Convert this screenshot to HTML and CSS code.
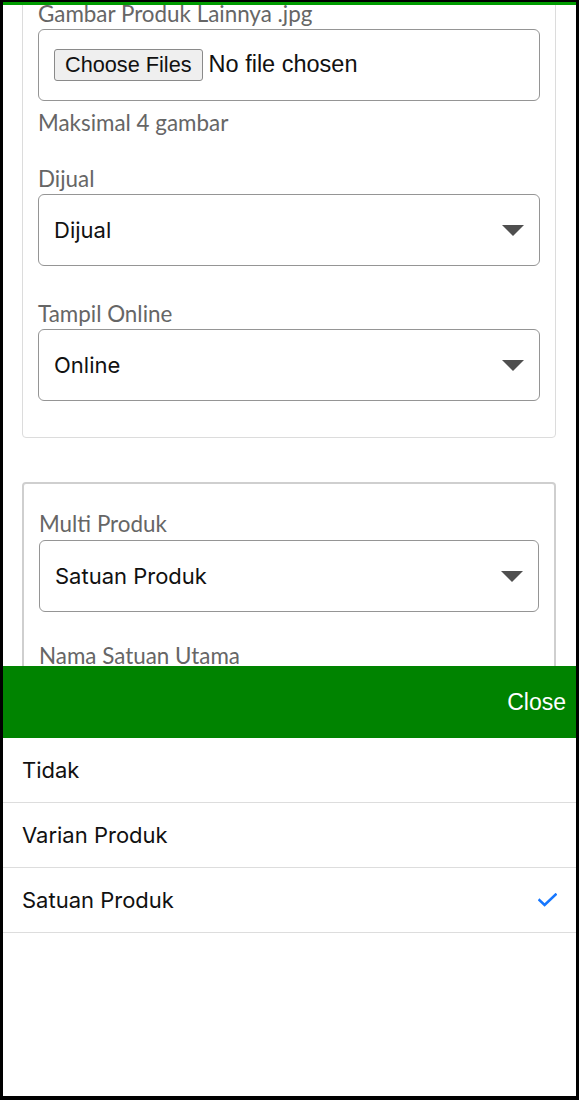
FILE: index.html
```html
<!DOCTYPE html>
<html lang="id">
<head>
<meta charset="utf-8">
<title>Produk</title>
<link rel="stylesheet" href="styles.css">
</head>
<body>
<div class="frame">
  <div class="topline"></div>
  <div class="viewport">
    <div class="page">
      <div class="card card-first">
        <div class="label">Gambar Produk Lainnya .jpg</div>
        <div class="filebox"><input class="file" type="file" multiple></div>
        <div class="helper">Maksimal 4 gambar</div>

        <div class="label gap-a">Dijual</div>
        <div class="select"><span class="value">Dijual</span><span class="caret"></span></div>

        <div class="label gap-b">Tampil Online</div>
        <div class="select"><span class="value">Online</span><span class="caret"></span></div>
      </div>

      <div class="card card-second">
        <div class="label label-multi">Multi Produk</div>
        <div class="select"><span class="value">Satuan Produk</span><span class="caret"></span></div>

        <div class="label gap-c">Nama Satuan Utama</div>
        <div class="select"><span class="value"></span></div>
      </div>
    </div>
  </div>

  <div class="sheet">
    <div class="sheet-head"><span class="close">Close</span></div>
    <div class="opt"><span>Tidak</span></div>
    <div class="opt"><span>Varian Produk</span></div>
    <div class="opt"><span>Satuan Produk</span>
      <svg class="check" width="19" height="14" viewBox="0 0 19 14"><path d="M1.5 7.2 L6.6 12 L17.6 1.6" fill="none" stroke="#1677ff" stroke-width="2.6" stroke-linecap="square"/></svg>
    </div>
  </div>
</div>
</body>
</html>
```

FILE: styles.css
```css
html, body {
  margin: 0;
  padding: 0;
  background: #fff;
}

.frame {
  position: relative;
  width: 579px;
  height: 1100px;
  box-sizing: border-box;
  border: 3px solid #000;
  border-top-width: 2px;
  border-bottom-width: 4px;
  display: flex;
  flex-direction: column;
  overflow: hidden;
  background: #fff;
}

.topline {
  height: 3px;
  background: #009c00;
  flex: none;
}

.viewport {
  flex: 1;
  overflow: hidden;
}

.page {
  padding: 0 20px 0 19px;
}

.card {
  border: 1px solid #dcdcdc;
  border-radius: 4px;
  padding: 15px 15px 36px;
}

.card-first {
  margin-top: -20px;
}

.card-second {
  margin-top: 44px;
  border: 2px solid #cfcfcf;
  padding: 27px 15px 40px;
}

.label {
  font-family: Lato, "Liberation Sans", sans-serif;
  font-size: 22.4px;
  line-height: 26px;
  color: #666;
  margin-bottom: 2px;
}

.label-multi {
  margin-bottom: 3px;
}

.gap-a { margin-top: 31px; }
.gap-b { margin-top: 35px; }
.gap-c { margin-top: 31px; }

.helper {
  font-family: Lato, "Liberation Sans", sans-serif;
  font-size: 22.4px;
  line-height: 24px;
  color: #666;
  margin-top: 10px;
}

.filebox {
  height: 72px;
  box-sizing: border-box;
  border: 1px solid #959595;
  border-radius: 6px;
  display: flex;
  align-items: center;
  padding-left: 15px;
}

.file {
  font-family: "Liberation Sans", Arial, sans-serif;
  font-size: 23.5px;
  color: #111;
}

.file::file-selector-button {
  font-family: "Liberation Sans", Arial, sans-serif;
  font-size: 21.7px;
  line-height: 24px;
  padding: 3px 10px 3px;
  margin-right: 6px;
  border: 1px solid #8a8a8a;
  border-radius: 3px;
  background: #efefef;
  color: #111;
}

.select {
  height: 72px;
  box-sizing: border-box;
  border: 1px solid #959595;
  border-radius: 6px;
  display: flex;
  align-items: center;
  justify-content: space-between;
  padding: 0 15px;
}

.value {
  font-family: Inter, "Noto Sans", sans-serif;
  font-size: 22px;
  color: #111;
  margin-top: -1px;
}

.caret {
  width: 0;
  height: 0;
  border-left: 11px solid transparent;
  border-right: 11px solid transparent;
  border-top: 11px solid #4f4f4f;
  margin-top: 1px;
}

.sheet {
  position: absolute;
  left: 0;
  right: 0;
  top: 664px;
  bottom: 0;
  background: #fff;
}

.sheet-head {
  height: 72px;
  background: #008300;
  display: flex;
  align-items: center;
  justify-content: flex-end;
  padding-right: 10px;
}

.close {
  font-family: "Liberation Sans", Arial, sans-serif;
  font-size: 23px;
  color: #fff;
}

.opt {
  height: 65px;
  box-sizing: border-box;
  border-bottom: 1px solid #dddddd;
  padding: 0 19px;
  display: flex;
  align-items: center;
  justify-content: space-between;
  font-family: Inter, "Noto Sans", sans-serif;
  font-size: 22px;
  color: #111;
}

.check {
  display: block;
}
```
